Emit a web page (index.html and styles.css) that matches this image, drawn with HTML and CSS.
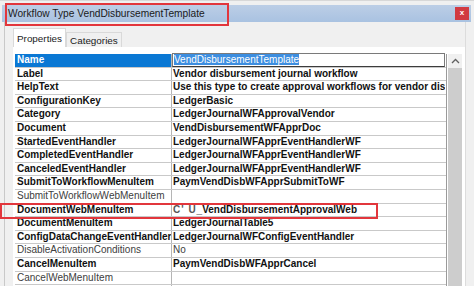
FILE: index.html
```html
<!DOCTYPE html>
<html>
<head>
<meta charset="utf-8">
<link rel="stylesheet" href="styles.css">
</head>
<body>
<div class="window">
  <div class="titlebar">
    <span class="title">Workflow Type VendDisbursementTemplate</span>
    <span class="close">x</span>
  </div>
  <div class="content">
    <div class="tabs">
      <div class="tab active">Properties</div>
      <div class="tab">Categories</div>
    </div>
    <div class="page">
      <div class="grid">
        <div class="row selected"><div class="k">Name</div><div class="v"><span class="sel">VendDisbursementTemplate</span></div></div>
        <div class="row"><div class="k">Label</div><div class="v">Vendor disbursement journal workflow</div></div>
        <div class="row"><div class="k">HelpText</div><div class="v">Use this type to create approval workflows for vendor disbursement journals</div></div>
        <div class="row"><div class="k">ConfigurationKey</div><div class="v">LedgerBasic</div></div>
        <div class="row"><div class="k">Category</div><div class="v">LedgerJournalWFApprovalVendor</div></div>
        <div class="row"><div class="k">Document</div><div class="v">VendDisbursementWFApprDoc</div></div>
        <div class="row"><div class="k">StartedEventHandler</div><div class="v">LedgerJournalWFApprEventHandlerWF</div></div>
        <div class="row"><div class="k">CompletedEventHandler</div><div class="v">LedgerJournalWFApprEventHandlerWF</div></div>
        <div class="row"><div class="k">CanceledEventHandler</div><div class="v">LedgerJournalWFApprEventHandlerWF</div></div>
        <div class="row"><div class="k">SubmitToWorkflowMenuItem</div><div class="v">PaymVendDisbWFApprSubmitToWF</div></div>
        <div class="row plain"><div class="k">SubmitToWorkflowWebMenuItem</div><div class="v"></div></div>
        <div class="row"><div class="k">DocumentWebMenuItem</div><div class="v"><span class="blur">C' U</span>_VendDisbursementApprovalWeb</div></div>
        <div class="row"><div class="k">DocumentMenuItem</div><div class="v">LedgerJournalTable5</div></div>
        <div class="row"><div class="k">ConfigDataChangeEventHandler</div><div class="v">LedgerJournalWFConfigEventHandler</div></div>
        <div class="row plain"><div class="k">DisableActivationConditions</div><div class="v">No</div></div>
        <div class="row"><div class="k">CancelMenuItem</div><div class="v">PaymVendDisbWFApprCancel</div></div>
        <div class="row plain"><div class="k">CancelWebMenuItem</div><div class="v"></div></div>
        <div class="row"><div class="k"></div><div class="v"></div></div>
      </div>
      <div class="scrollbar">
        <div class="up"><svg width="9" height="6" viewBox="0 0 9 6"><path d="M1 5 L4.5 1.5 L8 5" fill="none" stroke="#606060" stroke-width="1.3"/></svg></div>
        <div class="track"></div>
      </div>
    </div>
  </div>
  <div class="mark mark-title"></div>
  <div class="mark mark-row"></div>
</div>
</body>
</html>
```

FILE: styles.css
```css
html, body {
  margin: 0;
  padding: 0;
  background: #f0f0f0;
  overflow: hidden;
}
.window {
  position: relative;
  width: 474px;
  height: 286px;
  padding-top: 4px;
  box-sizing: border-box;
  background: #f0f0f0;
  border-top: 1px solid #d8d8d8;
  font-family: "Liberation Sans", Arial, sans-serif;
  overflow: hidden;
}
.titlebar {
  height: 17px;
  margin: 0 3px 0 2px;
  background: linear-gradient(#bccee6, #a9c2e1);
  display: flex;
  align-items: center;
  justify-content: space-between;
  padding-left: 6px;
}
.title {
  font-size: 10.2px;
  color: #1a1a1a;
}
.close {
  width: 14px;
  height: 13px;
  margin-right: 2px;
  background: #d13a41;
  color: #fff;
  font-size: 8px;
  font-weight: bold;
  line-height: 12px;
  text-align: center;
}
.content {
  margin: 0 8px 0 4px;
  border-left: 1px solid #c9c9c9;
  border-right: 1px solid #dcdcdc;
  padding: 6px 0 0 8px;
  height: 300px;
  background: #f0f0f0;
}
.tabs {
  display: flex;
  align-items: flex-end;
  height: 19px;
}
.tab {
  font-size: 9.9px;
  color: #1a1a1a;
  border: 1px solid #d9d9d9;
  border-bottom: none;
  padding: 1px 3px 0;
  height: 15px;
  box-sizing: border-box;
  line-height: 13px;
  background: #f0f0f0;
}
.tab.active {
  background: #fff;
  height: 19px;
  padding: 3px 3px 0;
  line-height: 14px;
}
.page {
  background: #fff;
  padding: 7px 0 0 2px;
  display: flex;
  align-items: flex-start;
  height: 300px;
}
.grid {
  width: 431px;
  border-right: 1px solid #9a9a9a;
}
.row {
  display: grid;
  grid-template-columns: 157px 273px;
  height: 13.6px;
  box-sizing: border-box;
  border-bottom: 1px solid #c9c9c9;
  font-size: 10px;
  font-weight: bold;
  color: #111;
}
.row .k, .row .v {
  white-space: nowrap;
  overflow: hidden;
  line-height: 12.6px;
}
.row .k {
  padding-left: 2px;
  border-right: 1px solid #b5b5b5;
}
.row .v {
  padding-left: 1px;
}
.row.plain {
  font-weight: normal;
  color: #404040;
}
.row.selected .k {
  background: #0a78d4;
  color: #fff;
}
.row.selected .v {
  font-weight: normal;
  border: 1px solid #7a7a7a;
  border-bottom-color: #3c3c3c;
  margin-top: -1px;
}
.sel {
  background: #3d8ee0;
  color: #fff;
}
.blur {
  color: #555;
  letter-spacing: 1px;
}
.scrollbar {
  width: 14px;
  margin-left: 1px;
  display: flex;
  flex-direction: column;
}
.up {
  height: 14px;
  background: #f0f0f0;
  display: flex;
  align-items: center;
  justify-content: center;
}
.track {
  height: 260px;
  background: #cdcdcd;
}
.mark {
  position: absolute;
  border: 2px solid #e2363c;
  box-sizing: border-box;
}
.mark-title {
  left: 5px;
  top: 2px;
  width: 224px;
  height: 23px;
}
.mark-row {
  left: 0;
  top: 202px;
  width: 378px;
  height: 16px;
}
```
